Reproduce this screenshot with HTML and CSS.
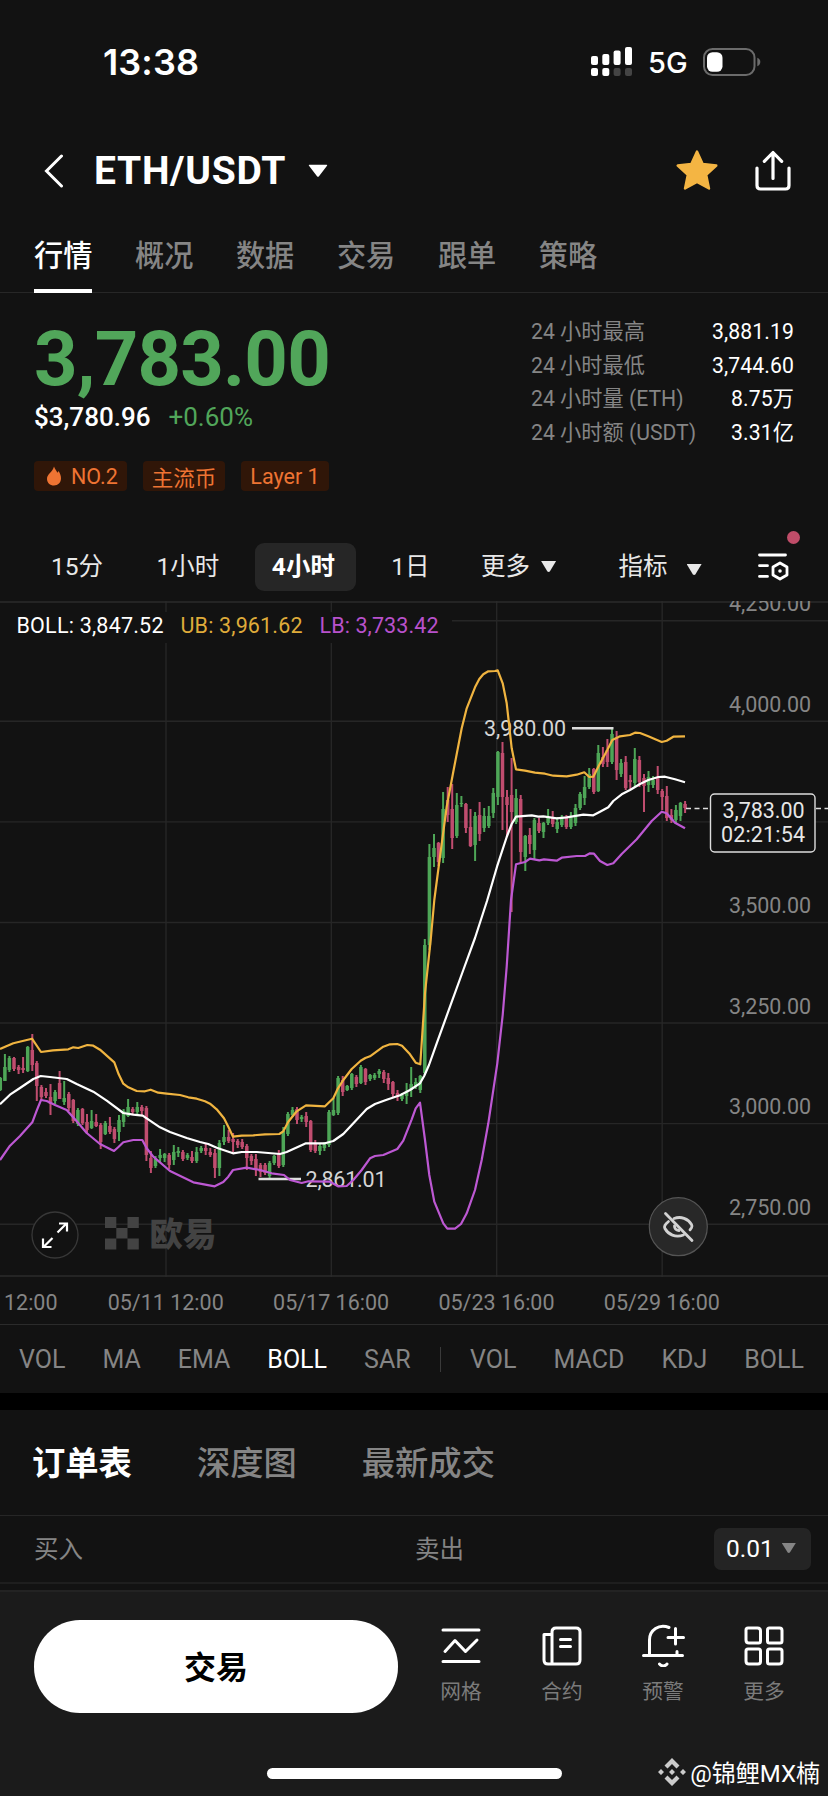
FILE: index.html
```html
<!DOCTYPE html>
<html lang="zh-CN">
<head>
    <meta charset="UTF-8">
    <meta name="viewport" content="width=device-width, initial-scale=1.0">
    <title>ETH/USDT</title>
    <link rel="stylesheet" href="styles.css">
</head>
<body>

    <div class="statusbar">
        <span class="time">13:38</span>
        <svg class="signal" width="42" height="30" viewBox="0 0 42 30" fill="#fff">
            <rect x="0" y="9" width="7" height="9" rx="2"/>
            <rect x="11.3" y="7" width="7" height="11" rx="2"/>
            <rect x="22.6" y="3.5" width="7" height="14.5" rx="2"/>
            <rect x="34" y="0" width="7" height="18" rx="2"/>
            <rect x="0" y="21" width="7" height="8" rx="2"/>
            <rect x="11.3" y="21" width="7" height="8" rx="2"/>
            <rect x="22.6" y="21" width="7" height="8" rx="2" fill="#444"/>
            <rect x="34" y="21" width="7" height="8" rx="2" fill="#444"/>
        </svg>
        <span class="net">5G</span>
        <svg class="battery" width="58" height="28" viewBox="0 0 58 28">
            <rect x="1" y="1" width="50.5" height="26" rx="8.5" fill="none" stroke="#6b6b6b" stroke-width="2"/>
            <rect x="4" y="4.2" width="15.5" height="19.6" rx="5.5" fill="#fff"/>
            <path d="M54.3 9.8c2 .8 3 2.3 3 4.2s-1 3.4-3 4.2z" fill="#6b6b6b"/>
        </svg>
    </div>

    <div class="header">
        <svg class="back" width="20" height="34" viewBox="0 0 20 34"><path d="M17.5 2 2.5 17l15 15" fill="none" stroke="#fff" stroke-width="3" stroke-linecap="round"/></svg>
        <h1>ETH/USDT</h1>
        <svg class="caret" width="20" height="14" viewBox="0 0 20 14"><path d="M1.5.8h17q1.3 0 .5 1l-8 10.4q-1 1.2-2 0L1 1.8Q.2.8 1.5.8z" fill="#fff"/></svg>
        <svg class="star" width="42" height="42" viewBox="0 0 42 42"><path d="M21 1.5 26.7 14 40.3 15.5 30.2 24.8 33 38.5 21 32 9 38.5 11.8 24.8 1.7 15.5 15.3 14z" fill="#f4b543" stroke="#f4b543" stroke-width="2.4" stroke-linejoin="round"/></svg>
        <svg class="share" width="36" height="42" viewBox="0 0 36 42"><path d="M2 18v17.5q0 3.500 3.500 3.500h25q3.500 0 3.500-3.500V18M18 28.500V2.500M9.300 11.300 18 2.500l8.700 8.800" fill="none" stroke="#fff" stroke-width="3.2" stroke-linecap="round" stroke-linejoin="round"/></svg>
    </div>

    <div class="tabs">
        <span class="tab active">行情</span>
        <span class="tab">概况</span>
        <span class="tab">数据</span>
        <span class="tab">交易</span>
        <span class="tab">跟单</span>
        <span class="tab">策略</span>
    </div>

    <div class="summary">
        <div class="left">
            <div class="price">3,783.00</div>
            <div class="sub"><span>$3,780.96</span><span class="up">+0.60%</span></div>
            <div class="tags">
                <span class="tag"><svg width="14" height="20" viewBox="0 0 14 20"><path d="M7 .5c.8 2.8 2.5 4 3.400 6.300.4-.5.7-1.200.9-1.800C13 7 14 9.600 14 12.300 14 16.500 11 19.500 7 19.500s-7-2.800-7-6.800C0 8 5.500 6.500 7 .5z" fill="#ee7433"/></svg>NO.2</span>
                <span class="tag">主流币</span>
                <span class="tag">Layer 1</span>
            </div>
        </div>
        <div class="stats">
            <div class="stat"><span>24 小时最高</span><b>3,881.19</b></div>
            <div class="stat"><span>24 小时最低</span><b>3,744.60</b></div>
            <div class="stat"><span>24 小时量 (ETH)</span><b>8.75万</b></div>
            <div class="stat"><span>24 小时额 (USDT)</span><b>3.31亿</b></div>
        </div>
    </div>

    <div class="ranges">
        <span class="range">15分</span>
        <span class="range">1小时</span>
        <span class="range active">4小时</span>
        <span class="range">1日</span>
        <span class="range more">更多<i class="arrow"></i></span>
        <span class="range ind">指标<i class="arrow"></i></span>
        <span class="settings">
            <svg width="31" height="28" viewBox="0 0 31 28" fill="none" stroke="#fff" stroke-width="2.8" stroke-linecap="round" stroke-linejoin="round">
                <path d="M1.5 2h26M1.5 12.7h8M1.5 23.400h8"/>
                <path d="M22 10 29 14v8l-7 4-7-4v-8z"/>
                <circle cx="22" cy="18" r="1.8" fill="#fff" stroke="none"/>
            </svg>
            <i class="dot"></i>
        </span>
    </div>

    <svg class="chart" width="828" height="676" viewBox="0 601 828 676">
        <path class="grid" d="M0 620.7H828M0 721.3H828M0 821.9H828M0 922.5H828M0 1023H828M0 1123.6H828M0 1224.2H828M166 601V1277M331.3 601V1277M496.7 601V1277M662.2 601V1277"/>
        <path class="grid edge" d="M0 602H828M0 1276H828"/>
        <rect x="0" y="612" width="452" height="31" fill="#121212"/>

        <g class="brand">
            <path d="M105 1217h11.3v11h-11.3zM127.5 1217h11.3v11h-11.3zM116.3 1228h11.2v10.500h-11.200zM105 1238.500h11.300v11h-11.300zM127.500 1238.500h11.300v11h-11.300z"/>
            <text x="149.5" y="1246">欧易</text>
        </g>

        <g id="candles"></g>

        <path d="M572 728.300h41.500M258.500 1179h42.500" stroke="#ddd" stroke-width="2.4"/>
        <text class="mark" x="484" y="736" textLength="82">3,980.00</text>
        <text class="mark" x="305.500" y="1186.500" textLength="81">2,861.01</text>

        <polyline class="line ub" points="0,1049 13.3,1043.3 32,1038.7 41,1052 53,1050.3 68.3,1049.3 73.3,1047.3 78.3,1048 87.3,1045 93.3,1045.7 100,1049.7 114.3,1062.3 118.7,1074.3 123.3,1083.7 128.3,1087.3 136.7,1091 145,1091.3 150.7,1089.7 158.3,1092.7 166.7,1093.7 180,1095 188.3,1097.3 196.7,1098.7 205,1101.3 210,1103.7 216.7,1109.3 224,1118.3 228.3,1126.7 233,1136.7 241.7,1135.7 253.3,1135.3 265,1134.3 279.3,1134 283.3,1131.3 288.3,1121.7 296.7,1111.3 306,1105.3 325,1106.3 333.3,1098.3 338,1088.3 343.3,1080 351.7,1069 360.7,1060.7 365.3,1058 370,1056.3 383.3,1046.7 390,1044.3 397.3,1044 402,1045.7 410,1054.3 415.7,1062.7 420.3,1064.3 425,993 430.7,940 434.3,900 440,856.7 446.7,806.7 453.3,771.7 461.7,728.3 466.7,708.3 475,687.3 479.3,679 483.3,674.3 488.3,671.3 495,671 497.7,670.3 502.7,683.3 506.7,703.3 509.3,726.7 511.7,748.3 516,769.3 525,770.7 535,772.7 545,773.7 553.3,775.7 566.7,776.3 576.7,774.7 584.3,772.3 589.3,777 593.3,776.7 598.3,766.7 607.3,750 612.3,740 620,736.3 630,735 635,732.7 640,733 648.3,736.3 661.7,742 666.7,740.7 673.3,736.7 685,736.3"/>
        <polyline class="line mb" points="0,1104.3 10,1094.7 20,1088 33.3,1079 40.7,1076 50,1077 66.7,1079 76.7,1084 93.3,1091.7 106.7,1100.7 123.3,1113 133.3,1114.7 142.7,1115.7 150,1120.7 160,1127.3 170,1132 186.7,1138 200,1142 208.3,1144 216.7,1147.7 233,1153.3 241.7,1152 256.7,1152 280,1154 286.7,1152 306,1143.3 325,1143.3 333.3,1141 343.3,1134 366.7,1109 375,1104 386.7,1099.7 400,1095.3 410,1090 420,1083.3 424.3,1075.7 429,1065 436.7,1043.3 450,1006.7 463.3,970 475,938 487,901 497,866.7 506.7,837 511.7,824 516,816.7 531.7,815.3 538.3,816.7 543.3,816.3 556.7,818.3 566.7,817.3 583.3,814.7 593.3,815.3 600,811.7 608.3,807.3 613.3,801 621.7,794.3 630,790 640,784 648.3,780 658.3,777 665,776.7 675,779.3 685,782.3"/>
        <polyline class="line lb" points="0,1160 10,1145.7 20,1136 32.3,1122.3 36.7,1110.7 41,1100 46.7,1101 55,1105 66.7,1110 76.7,1121.3 86.7,1133 100,1144 114,1151 118.7,1146.7 123.3,1142.3 133.3,1140 142.3,1140 146.7,1148.3 153.3,1156.7 170,1171 193.3,1182.3 214.7,1186.3 223.3,1182 228.3,1176.7 233,1170 246.7,1167.7 260,1170 271.7,1173.3 284,1175 290,1180 301.7,1183 308.3,1181.3 330,1181.7 338,1186.3 346.7,1186 353.3,1180 361.7,1170 370,1158.3 375,1156 383.3,1155 397.3,1149 403.3,1140.7 411.7,1119.3 415.7,1108.3 420,1102.7 425,1140 429.3,1175 434.3,1201.7 443.3,1223.3 447.3,1228.7 455,1228.7 461,1224 466.7,1213.3 475,1190 481.7,1160 488.3,1123.3 497.3,1063.3 502.7,1015 506.7,966.7 511,900 516,864.3 525,862 530,858.7 539.3,860.3 544,859.3 556.7,860.7 561.7,857.7 576.7,856 585,856 590,853.3 594,853.7 600,861 607.3,865 613.3,863.3 621.7,854 636.7,839.3 651.7,821 661.7,811.7 666.7,813.3 675,822.7 685,828.3"/>

        <g class="legend">
            <text x="16.5" y="633" textLength="147">BOLL: 3,847.52</text>
            <text x="180.5" y="633" textLength="122" fill="#dfab3a">UB: 3,961.62</text>
            <text x="319.5" y="633" textLength="119" fill="#b851cc">LB: 3,733.42</text>
        </g>

        <g class="axis">
            <text x="811" y="611" textLength="82">4,250.00</text>
            <text x="811" y="711.5" textLength="82">4,000.00</text>
            <text x="811" y="913" textLength="82">3,500.00</text>
            <text x="811" y="1013.5" textLength="82">3,250.00</text>
            <text x="811" y="1114" textLength="82">3,000.00</text>
            <text x="811" y="1214.5" textLength="82">2,750.00</text>
        </g>

        <path d="M686 808.5h24M816 808.5h12" stroke="#ddd" stroke-width="1.5" stroke-dasharray="5 3.5"/>
        <rect x="710.5" y="794" width="104.5" height="58" rx="4" fill="#121212" stroke="#ddd" stroke-width="1.4"/>
        <text class="now" x="763.5" y="817.5" textLength="82">3,783.00</text>
        <text class="now" x="763" y="842" textLength="84">02:21:54</text>

        <circle cx="55" cy="1235" r="23" fill="#121212" stroke="#383838" stroke-width="1.3"/>
        <path d="M57.5 1232.5 66.5 1223.5M59 1223.5h8v8M52.5 1238 43.5 1247M51.5 1247h-8.5v-8.5" fill="none" stroke="#fff" stroke-width="2.2"/>

        <g fill="none" stroke="#d2d2d2" stroke-width="2.8" stroke-linecap="round">
            <circle cx="678.3" cy="1226.7" r="29" fill="#282828" stroke="#555" stroke-width="1.2"/>
            <path d="M674 1218.500c7-2.500 14 0 17.500 6q1 1.700 0 3.300l-1.500 2M668.500 1221.500c-1.500 1.200-3 2.600-3.600 4q-.8 1.500 0 3c3.300 6 10.500 9.500 18.600 6.500"/>
            <path d="M674.500 1226q0 4 4.500 4.500"/>
            <path d="M665.500 1213.500 692 1240.500"/>
        </g>
    </svg>

    <div class="dates">
        <span class="first">12:00</span>
        <span>05/11 12:00</span>
        <span>05/17 16:00</span>
        <span>05/23 16:00</span>
        <span>05/29 16:00</span>
    </div>

    <div class="indicators">
        <span>VOL</span>
        <span>MA</span>
        <span>EMA</span>
        <span class="active">BOLL</span>
        <span>SAR</span>
        <i class="sep"></i>
        <span>VOL</span>
        <span>MACD</span>
        <span>KDJ</span>
        <span>BOLL</span>
    </div>

    <div class="booktabs">
        <span class="active">订单表</span>
        <span>深度图</span>
        <span>最新成交</span>
    </div>

    <div class="book">
        <span class="buy">买入</span>
        <span class="sell">卖出</span>
        <span class="step">0.01<i class="arrow"></i></span>
    </div>

    <div class="bottom">
        <div class="actions">
            <button class="trade">交易</button>
            <div class="item">
                <svg width="44" height="44" viewBox="0 0 44 44"><path d="M4 7h36M4 38.500h36M6 28.500 16 17.500 26.500 28.500 38 17"/></svg>
                <span>网格</span>
            </div>
            <div class="item">
                <svg width="44" height="44" viewBox="0 0 44 44"><path d="M12 9q0-4 4-4h20q4 0 4 4v28q0 4-4 4H8q-4 0-4-4V11.500h8M12 9v32M20.500 16.500h10M20.500 23.500h10"/></svg>
                <span>合约</span>
            </div>
            <div class="item">
                <svg width="44" height="44" viewBox="0 0 44 44"><path d="M28 4.500C18 .5 8.500 7 8.500 17v15M2.500 32.500h39M36 28.500v4M34.500 5.500v15.500M27 14.500h15.500M18.500 41c1.500 2.500 6 2.500 7.500 0"/></svg>
                <span>预警</span>
            </div>
            <div class="item">
                <svg width="44" height="44" viewBox="0 0 44 44"><path d="M4 7q0-2 2-2h9.500q3 0 3 3v10q0 2-2 2H7q-3 0-3-3zM25.500 7q0-2 2-2h10q2.500 0 2.500 2.500V18q0 2-2 2H27.500q-2 0-2-2zM4 28q0-2 2-2h10.500q2 0 2 2v10.500q0 2.500-2.500 2.500H7q-3 0-3-3zM25.500 28q0-2 2-2H38q2 0 2 2v10q0 3-3 3h-9.500q-2 0-2-2z"/></svg>
                <span>更多</span>
            </div>
        </div>
        <div class="homebar"></div>
        <div class="credit">
            <svg width="28" height="28" viewBox="0 0 28 28" fill="#ccc"><path d="M14 0l7.500 7.500-3 3L14 6l-4.500 4.500-3-3zM14 28l-7.500-7.500 3-3L14 22l4.500-4.500 3 3zM14 11l3 3-3 3-3-3zM3 11l3 3-3 3-3-3zM25 11l3 3-3 3-3-3z"/></svg>
            <span>@锦鲤MX楠</span>
        </div>
    </div>

    <script src="script.js"></script>
</body>
</html>
```
FILE: styles.css
```css
* {
    box-sizing: border-box;
}

body {
    margin: 0;
    width: 828px;
    height: 1796px;
    overflow: hidden;
    display: flex;
    flex-direction: column;
    background: #121212;
    color: #fff;
    font-family: Roboto, "Noto Sans CJK SC", sans-serif;
}

svg {
    display: block;
    flex: none;
}

/* top */
.statusbar {
    height: 124px;
    display: flex;
    align-items: center;
    padding-left: 103px;
    font-family: Inter, sans-serif;
}

.time {
    width: 488px;
    font-size: 36px;
    font-weight: 600;
    letter-spacing: 0.1px;
}

.net {
    width: 55px;
    margin-left: 15px;
    font-size: 29px;
    font-weight: 500;
}

.header {
    height: 93px;
    display: flex;
    align-items: center;
    padding: 0 37px 0 44px;
}

.header h1 {
    margin: 0 22px 0 30px;
    width: 192px;
    font-size: 39px;
    font-weight: 700;
    letter-spacing: 0.7px;
    white-space: nowrap;
}

.star {
    margin-left: auto;
    margin-right: 37px;
}

.tabs {
    height: 76px;
    display: flex;
    gap: 42.6px;
    padding-left: 34px;
    border-bottom: 1.5px solid #272727;
}

.tab {
    height: 76px;
    font-size: 29.2px;
    line-height: 78px;
    font-weight: 500;
    color: #858585;
}

.tab.active {
    color: #fff;
    border-bottom: 4px solid #fff;
}

/* price block */
.summary {
    height: 240px;
    display: flex;
    justify-content: space-between;
    padding: 0 34px;
}

.price {
    margin-top: 22px;
    height: 88px;
    line-height: 88px;
    font-size: 76px;
    font-weight: 700;
    letter-spacing: -0.8px;
    color: #51a65a;
}

.sub {
    display: flex;
    gap: 18px;
    margin-top: -9px;
    font-size: 26px;
    line-height: 46px;
    font-weight: 500;
}

.up {
    color: #51a65a;
    font-weight: 400;
}

.tags {
    display: flex;
    gap: 16px;
    margin-top: 21px;
}

.tag {
    display: flex;
    align-items: center;
    gap: 10px;
    height: 30px;
    padding: 0 9px;
    border-radius: 4px;
    background: #301608;
    color: #ee7433;
    font-size: 21.5px;
}

.tag svg {
    margin-left: 4px;
}

.stats {
    width: 263px;
    padding-top: 22px;
}

.stat {
    display: flex;
    justify-content: space-between;
    height: 33.7px;
    line-height: 33.7px;
    font-size: 21.2px;
    white-space: nowrap;
    color: #858585;
}

.stat b {
    color: #fff;
    font-weight: 400;
    letter-spacing: 0.1px;
}

/* interval row */
.ranges {
    height: 68px;
    display: flex;
    align-items: center;
    padding-left: 33px;
    font-size: 24.5px;
    color: #e8e8e8;
}

.range {
    height: 48px;
    line-height: 48px;
    padding: 0 18px;
    margin-right: 17.5px;
    white-space: nowrap;
}

.range.active {
    padding: 0 17px;
    width: 101px;
    background: #262626;
    border-radius: 9px;
    color: #fff;
    font-weight: 700;
}

.arrow {
    display: inline-block;
    width: 15px;
    height: 11px;
    margin-left: 11px;
    vertical-align: 3px;
    background: #e8e8e8;
    clip-path: polygon(0 0, 100% 0, 58% 95%, 50% 100%, 42% 95%);
}

.more {
    margin-left: -2px;
}

.ind {
    margin-left: 9px;
    margin-right: 38px;
    padding-right: 18px;
}

.ind .arrow {
    margin-left: 19px;
    vertical-align: 0;
}

.settings {
    position: relative;
}

.dot {
    position: absolute;
    left: 29px;
    top: -22px;
    width: 13px;
    height: 13px;
    border-radius: 50%;
    background: #c04d69;
}

/* chart */
.grid {
    stroke: #262626;
    stroke-width: 1.4;
}

.edge {
    stroke: #2b2b2b;
}

.up-c {
    stroke: #4ea657;
}

.down-c {
    stroke: #c04d6f;
}

.wick {
    stroke-width: 2;
}

.bodies {
    stroke-width: 3.5;
}

.line {
    fill: none;
    stroke-width: 2.2;
    stroke-linejoin: round;
}

.ub {
    stroke: #f0b440;
}

.mb {
    stroke: #fff;
}

.lb {
    stroke: #bd58d3;
}

.chart text {
    font-size: 21.5px;
}

.legend {
    fill: #fff;
}

.mark {
    fill: #d6d6d6;
}

.now {
    fill: #e6e6e6;
    text-anchor: middle;
}

.axis {
    fill: #858585;
    text-anchor: end;
}

.brand {
    fill: #434343;
}

.chart .brand text {
    font-size: 33.5px;
    font-weight: 900;
}

.dates {
    height: 48px;
    display: flex;
    align-items: center;
    padding-top: 3px;
    border-bottom: 1.5px solid #2b2b2b;
    font-size: 21.5px;
    color: #858585;
}

.dates span {
    width: 165.4px;
    text-align: center;
}

.dates .first {
    width: 83px;
    text-align: left;
    padding-left: 4px;
}

.indicators {
    height: 85px;
    display: flex;
    align-items: center;
    justify-content: space-between;
    padding: 0 24px 0 19px;
    border-bottom: 17px solid #000;
    font-size: 25px;
    color: #858585;
}

.indicators .active {
    color: #fff;
}

.sep {
    width: 1.5px;
    height: 25px;
    margin: 0 -8px;
    background: #3a3a3a;
}

/* order book */
.booktabs {
    height: 106px;
    display: flex;
    align-items: center;
    gap: 65px;
    padding: 0 0 4px 32px;
    border-bottom: 1.5px solid #262626;
    font-size: 33.3px;
    font-weight: 500;
    color: #858585;
}

.booktabs .active {
    color: #fff;
    font-weight: 700;
}

.book {
    height: 68px;
    display: flex;
    align-items: center;
    padding: 0 17px 0 34px;
    border-bottom: 2px solid #1e1e1e;
    font-size: 24.5px;
    color: #858585;
}

.buy,
.sell {
    padding-bottom: 3px;
}

.buy {
    width: 381px;
}

.step {
    margin-left: auto;
    width: 97px;
    height: 42px;
    padding-left: 12px;
    line-height: 42px;
    border-radius: 7px;
    background: #242424;
    color: #fff;
}

.step .arrow {
    width: 14px;
    height: 10px;
    margin-left: 8px;
    vertical-align: 4px;
    background: #858585;
}

/* bottom bar */
.bottom {
    position: relative;
    flex: 1;
    margin-top: 6px;
    padding-top: 28px;
    border-top: 2px solid #232323;
    background: #1b1b1b;
}

.actions {
    display: flex;
    align-items: flex-start;
    padding-left: 34px;
}

.trade {
    width: 364px;
    height: 93px;
    margin-right: 12.5px;
    padding-bottom: 5px;
    border: 0;
    border-radius: 46px;
    background: #fff;
    color: #000;
    font: 700 32px "Noto Sans CJK SC", sans-serif;
}

.item {
    width: 101px;
    display: flex;
    flex-direction: column;
    align-items: center;
    gap: 8px;
    font-size: 20.7px;
    color: #7b7b7b;
}

.item svg {
    margin-top: 3px;
    fill: none;
    stroke: #fff;
    stroke-width: 3;
    stroke-linecap: round;
    stroke-linejoin: round;
}

.homebar {
    width: 295px;
    height: 11px;
    margin: 55px auto 0 267px;
    border-radius: 6px;
    background: #fff;
}

.credit {
    position: absolute;
    right: 8px;
    bottom: 7px;
    display: flex;
    align-items: center;
    gap: 4px;
    font-size: 24px;
    white-space: nowrap;
}
```
FILE: script.js
```javascript
// one candle per entry: direction, high, body top, body bottom, low
const data = `
u 1077 1078 1090 1091|u 1054 1067 1081 1081|u 1056 1058 1070 1072|d 1057 1058 1069 1071|d 1065 1067 1070 1074
d 1057 1068 1070 1073|u 1046 1047 1071 1072|d 1034 1050 1065 1071|d 1061 1063 1086 1101|d 1085 1087 1097 1100
d 1088 1092 1096 1098|d 1084 1097 1104 1115|u 1090 1092 1101 1104|d 1071 1083 1099 1099|u 1081 1098 1102 1105
d 1092 1094 1108 1111|d 1099 1100 1121 1123|u 1108 1110 1124 1126|d 1108 1109 1123 1125|d 1114 1122 1130 1133
u 1110 1121 1128 1129|d 1114 1122 1126 1127|d 1123 1125 1142 1149|u 1121 1123 1134 1135|d 1117 1126 1132 1134
d 1127 1129 1139 1143|u 1115 1120 1132 1141|u 1109 1111 1122 1127|u 1099 1107 1116 1117|d 1107 1109 1112 1114
u 1102 1107 1112 1114|d 1105 1107 1111 1116|d 1106 1108 1155 1161|d 1151 1158 1168 1173|u 1156 1159 1166 1168
u 1149 1155 1158 1162|u 1153 1154 1158 1162|d 1153 1155 1165 1169|u 1145 1152 1160 1165|u 1147 1151 1153 1157
d 1150 1152 1159 1161|u 1153 1155 1158 1160|d 1151 1157 1161 1163|u 1147 1152 1161 1163|u 1146 1148 1151 1153
d 1144 1148 1151 1155|d 1148 1152 1155 1157|d 1149 1153 1168 1178|u 1140 1143 1168 1176|u 1125 1137 1142 1145
d 1130 1137 1141 1143|d 1133 1139 1142 1152|d 1139 1141 1145 1148|d 1139 1142 1147 1149|d 1144 1146 1158 1170
d 1154 1156 1161 1165|d 1154 1159 1169 1176|d 1163 1165 1172 1177|d 1163 1165 1173 1175|u 1161 1163 1176 1179
u 1155 1156 1163 1165|d 1150 1154 1166 1168|u 1127 1131 1165 1167|u 1112 1114 1134 1136|u 1107 1110 1115 1117
d 1107 1109 1120 1124|u 1115 1117 1119 1122|d 1112 1116 1122 1127|d 1120 1121 1150 1152|d 1140 1143 1151 1153
u 1143 1146 1151 1155|u 1142 1144 1148 1151|u 1110 1112 1145 1147|u 1098 1110 1115 1116|u 1076 1078 1113 1115
d 1076 1080 1092 1096|u 1085 1086 1090 1091|u 1073 1074 1088 1090|d 1075 1077 1084 1087|u 1065 1067 1083 1084
d 1068 1069 1082 1085|u 1074 1075 1079 1081|u 1073 1075 1078 1080|u 1069 1071 1074 1078|d 1070 1072 1079 1083
d 1073 1078 1084 1090|d 1081 1082 1094 1097|d 1090 1093 1097 1101|u 1093 1095 1099 1101|u 1083 1092 1096 1104
u 1067 1084 1090 1097|u 1078 1082 1086 1089|u 1075 1076 1090 1093|u 939 945 1073 1075|u 844 857 945 950
u 834 848 857 867|d 842 843 862 866|u 792 809 858 863|d 787 800 815 822|d 784 809 838 849
u 793 805 836 838|u 796 803 804 807|d 803 804 828 833|d 809 827 846 847|u 812 816 845 861
d 802 815 834 841|u 808 816 828 832|u 806 816 826 828|u 788 793 813 818|u 751 752 797 805
d 742 753 797 830|d 790 797 805 836|d 758 795 812 912|u 789 798 822 824|d 795 799 852 863
u 835 836 857 871|d 828 835 844 854|u 818 820 850 860|d 818 823 831 833|u 822 823 832 838
u 809 818 823 825|d 811 818 824 827|u 817 822 829 833|u 815 818 825 827|d 815 818 827 829
u 812 816 827 829|u 804 808 823 826|u 792 794 808 810|u 776 787 798 805|u 768 774 787 789
d 768 769 792 794|u 745 753 791 792|d 747 757 764 767|d 739 750 762 767|u 729 734 762 764
d 731 738 770 780|u 759 763 774 777|d 756 762 788 790|d 775 780 782 789|u 748 759 783 787
d 756 760 782 787|d 774 778 786 812|u 771 777 785 792|u 776 780 785 788|d 766 777 790 794
d 789 791 797 810|d 786 796 818 821|d 809 815 820 823|u 805 810 820 823|u 802 803 816 821
d 801 804 808 813`;

const step = 4.565;
const paths = { u: ['', ''], d: ['', ''] };

data.trim().split(/[|\n]/).forEach((row, i) => {
    const [dir, high, top, bottom, low] = row.split(' ');
    const x = (0.3 + i * step).toFixed(1);
    paths[dir][0] += `M${x} ${high}V${low}`;
    paths[dir][1] += `M${x} ${top}V${bottom}`;
});

document.getElementById('candles').innerHTML = ['u', 'd'].map(dir => {
    const name = dir === 'u' ? 'up-c' : 'down-c';
    return `<path class="wick ${name}" d="${paths[dir][0]}"/><path class="bodies ${name}" d="${paths[dir][1]}"/>`;
}).join('');
```
